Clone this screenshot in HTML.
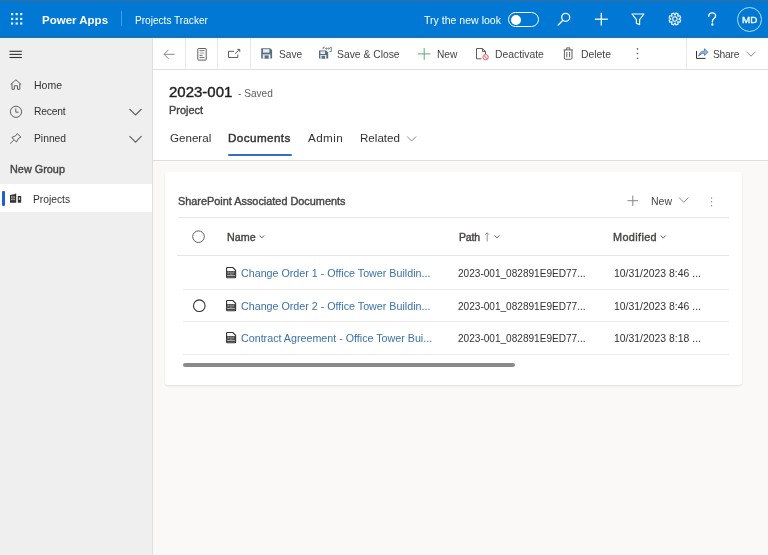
<!DOCTYPE html>
<html><head><meta charset="utf-8">
<style>
*{box-sizing:border-box;margin:0;padding:0}
html,body{width:768px;height:555px;overflow:hidden;background:#faf9f8;font-family:"Liberation Sans",sans-serif;color:#323130}
.a{position:absolute;white-space:nowrap;line-height:1;will-change:transform}
svg{position:absolute;overflow:visible}
#hdr{position:absolute;left:0;top:0;width:768px;height:37px;background:#0078d4}
#strip0{position:absolute;left:0;top:0;width:768px;height:1px;background:#2870a8}
#strip1{position:absolute;left:0;top:1px;width:768px;height:1px;background:#1474c4}
.w{color:#fff}
#side{position:absolute;left:0;top:37px;width:153px;height:518px;background:#efefef;border-right:1px solid #e1dfdd}
#cmd{position:absolute;left:153px;top:37px;width:615px;height:33px;background:#fff;border-bottom:1px solid #e1dfdd}
.sep{position:absolute;top:37px;width:1px;height:33px;background:#e8e8e8}
#fhdr{position:absolute;left:153px;top:70px;width:615px;height:91px;background:#fff;border-bottom:1px solid #e1dfdd}
#card{position:absolute;left:165px;top:172px;width:577px;height:213px;background:#fff;border-radius:3px;box-shadow:0 1px 2px rgba(0,0,0,.11),0 0 1px rgba(0,0,0,.04)}
.hl{position:absolute;height:1px;background:#edebe9}
.lnk{color:#3a72a8}
</style></head><body>
<div id="hdr"></div><div id="strip0"></div><div id="strip1"></div><div style="position:absolute;left:0;top:36px;width:768px;height:1px;background:#0a6fc4"></div><div style="position:absolute;left:0;top:37px;width:768px;height:1px;background:#2f72a8;z-index:5"></div><div style="position:absolute;left:0;top:38px;width:768px;height:1px;background:rgba(200,250,255,.5);z-index:5"></div>
<!-- waffle -->
<svg style="left:0;top:0" width="40" height="37"><g fill="#e6f6ff">
<rect x="11" y="13" width="2.2" height="2.2"/><rect x="15.6" y="13" width="2.2" height="2.2"/><rect x="20.1" y="13" width="2.2" height="2.2"/>
<rect x="11" y="17.8" width="2.2" height="2.2"/><rect x="15.6" y="17.8" width="2.2" height="2.2"/><rect x="20.1" y="17.8" width="2.2" height="2.2"/>
<rect x="11" y="22.4" width="2.2" height="2.2"/><rect x="15.6" y="22.4" width="2.2" height="2.2"/><rect x="20.1" y="22.4" width="2.2" height="2.2"/>
</g></svg>
<div class="a w" style="left:42px;top:15px;font-size:11.5px;font-weight:bold">Power Apps</div>
<div style="position:absolute;left:121px;top:11px;width:1px;height:15px;background:#4a9be0"></div>
<div class="a w" style="left:134.5px;top:15.5px;font-size:10.1px">Projects Tracker</div>
<div class="a w" style="left:424px;top:15px;font-size:10.55px">Try the new look</div>
<div style="position:absolute;left:508px;top:12px;width:31px;height:15px;border:1.3px solid #fff;border-radius:8px"></div>
<div style="position:absolute;left:511px;top:14.5px;width:10px;height:10px;border-radius:50%;background:#fff"></div>


<!-- header icons -->
<svg style="left:556px;top:12px" width="16" height="16" fill="none" stroke="#fff" stroke-width="1.3">
<circle cx="9.7" cy="5.3" r="4"/><line x1="6.9" y1="8.2" x2="2.2" y2="13" stroke-linecap="round"/></svg>
<svg style="left:594px;top:12px" width="16" height="16" stroke="#fff" stroke-width="1.3">
<line x1="7.3" y1="0.8" x2="7.3" y2="13.6"/><line x1="0.8" y1="7.2" x2="13.8" y2="7.2"/></svg>
<svg style="left:631px;top:13px" width="16" height="14" fill="none" stroke="#fff" stroke-width="1.2" stroke-linejoin="round">
<path d="M1 1 H13 L8.6 6.6 V11.6 L5.4 10.2 V6.6 Z"/></svg>
<svg style="left:0;top:0" width="768" height="37" fill="none" stroke="#fff" stroke-width="1.1" stroke-linejoin="round">
<path d="M678.99 19.26 L680.79 20.15 L679.88 22.35 L677.98 21.71 L677.61 22.08 L678.25 23.98 L676.05 24.89 L675.16 23.09 L674.64 23.09 L673.75 24.89 L671.55 23.98 L672.19 22.08 L671.82 21.71 L669.92 22.35 L669.01 20.15 L670.81 19.26 L670.81 18.74 L669.01 17.85 L669.92 15.65 L671.82 16.29 L672.19 15.92 L671.55 14.02 L673.75 13.11 L674.64 14.91 L675.16 14.91 L676.05 13.11 L678.25 14.02 L677.61 15.92 L677.98 16.29 L679.88 15.65 L680.79 17.85 L678.99 18.74 Z"/><circle cx="674.9" cy="19.0" r="2.2"/></svg>
<svg style="left:0;top:0" width="768" height="37" fill="none" stroke="#fff" stroke-width="1.35" stroke-linecap="round">
<path d="M708.8 16.2 C708.8 14 710.4 12.9 712.2 12.9 C714 12.9 715.6 14.1 715.6 15.9 C715.6 18.5 712.4 18.7 712.4 21.2 V22"/>
<circle cx="712.4" cy="24.4" r="0.55" fill="#fff"/></svg>
<div style="position:absolute;left:737px;top:7px;width:25px;height:25px;border:1.5px solid #b8dcf8;border-radius:50%"></div>
<div class="a w" style="left:741.6px;top:14.6px;font-size:9.9px;-webkit-text-stroke:0.35px #fff">MD</div>

<div id="side"></div>

<!-- sidebar content -->
<svg style="left:0;top:37px" width="152" height="180" fill="none" stroke="#323130" stroke-width="1.1">
<line x1="9.5" y1="14.3" x2="21.8" y2="14.3"/><line x1="9.5" y1="17.4" x2="21.8" y2="17.4"/><line x1="9.5" y1="20.5" x2="21.8" y2="20.5"/>
</svg>
<svg style="left:0;top:0" width="152" height="220" fill="none" stroke="#605e5c" stroke-width="1">
<path d="M10.6 84.5 L15.9 79.8 L21.2 84.5 M12 83.5 V89.3 H14.3 V85.8 H17.5 V89.3 H19.8 V83.5"/>
<circle cx="16" cy="111.8" r="5.6"/><path d="M15.8 108.5 V112.2 H18.6"/>
<path d="M17.3 133.6 L21 137.1 L18.4 138.4 L16.5 142 L11.8 137.5 L15.6 135.8 Z M13.8 140 L10.2 143.6" stroke-linejoin="round"/>
<path d="M129.5 109 L135.5 115 L141.5 109 M129.5 136.2 L135.5 142.2 L141.5 136.2" stroke="#605e5c" stroke-width="1.1"/>
</svg>
<div class="a" style="left:33.5px;top:80px;font-size:10.5px">Home</div>
<div class="a" style="left:33.5px;top:107px;font-size:10.3px;letter-spacing:-0.2px">Recent</div>
<div class="a" style="left:33.5px;top:134px;font-size:10.3px">Pinned</div>
<div class="a" style="left:9.8px;top:163.8px;font-size:10.87px;-webkit-text-stroke:0.4px #484644;color:#484644">New Group</div>
<div style="position:absolute;left:0;top:184px;width:152px;height:28px;background:#fff"></div>
<div style="position:absolute;left:2px;top:191px;width:2.5px;height:15px;background:#1a5fd6;border-radius:1px"></div>
<svg style="left:0;top:0" width="152" height="220">
<path d="M10 202.7 V195 L14.5 194.2 L16.2 193.3 V202.7 Z" fill="#323130"/>
<rect x="17.8" y="196" width="3.4" height="6.7" fill="#323130"/>
<rect x="11.2" y="196.2" width="1.3" height="1.6" fill="#d8d8d8"/><rect x="13.4" y="196.2" width="1.3" height="1.6" fill="#d8d8d8"/>
<rect x="11.2" y="198.6" width="1.3" height="1.6" fill="#d8d8d8"/><rect x="13.4" y="198.6" width="1.3" height="1.6" fill="#d8d8d8"/>
<rect x="18.8" y="197.5" width="1.3" height="2.4" fill="#d8d8d8"/>
</svg>
<div class="a" style="left:33.3px;top:194.8px;font-size:10.25px">Projects</div>

<div id="cmd"></div>
<div id="fhdr"></div>

<!-- command bar -->
<div class="sep" style="left:185px"></div><div class="sep" style="left:217px"></div><div class="sep" style="left:250px"></div><div class="sep" style="left:686px"></div>
<svg style="left:0;top:0" width="768" height="70" fill="none" stroke="#605e5c" stroke-width="1">
<path d="M164 54.3 H174.5 M168.6 49.7 L164 54.3 L168.6 58.9" stroke="#8a8886"/>
<rect x="197.8" y="48.5" width="8.4" height="11.6" rx="0.6" stroke="#605e5c"/>
<path d="M199.5 50.7 H204.5 M199.5 57.6 H204.5" stroke="#605e5c" stroke-width="0.9"/>
<rect x="199.6" y="52.3" width="4.6" height="2" fill="#c8c6c4" stroke="none"/>
<path d="M199.5 55.6 H202.5" stroke="#605e5c" stroke-width="0.9"/>
<path d="M234 51.3 H228.5 V57.5 H237.8 V54.5" stroke="#605e5c"/>
<path d="M235 53.8 L239.6 49.6 M237.3 49.4 H239.8 V51.9" stroke="#605e5c"/>
</svg>
<svg style="left:0;top:0" width="768" height="70">
<path d="M261.2 48.2 H270.2 L272.1 50.1 V58.6 H261.2 Z" fill="#5b6e80"/>
<rect x="263" y="49.2" width="6.4" height="3.4" fill="#e8eef3"/>
<rect x="262.8" y="54.4" width="7.6" height="4.2" fill="#e8eef3"/><rect x="264.6" y="55.4" width="4" height="3.2" fill="#5b6e80"/>
</svg>
<div class="a" style="left:278.8px;top:50px;font-size:10.2px;color:#464442">Save</div>
<svg style="left:0;top:0" width="768" height="70">
<path d="M319 50.5 H326.2 L328.2 52.5 V58.6 H319 Z" fill="#5b6e80"/>
<rect x="320.4" y="51.4" width="4.6" height="2.6" fill="#e8eef3"/>
<rect x="320.3" y="55" width="6" height="3.6" fill="#e8eef3"/><rect x="321.6" y="55.8" width="3.4" height="2.8" fill="#5b6e80"/>
<path d="M323.2 49.3 V47.3 H324.8 M329.8 47.3 H331.3 V51.6 H329.5" fill="none" stroke="#5b6e80" stroke-width="0.9"/>
<path d="M325.5 48.6 H329.6 M326.7 47.5 L325.5 48.6 L326.7 49.7 M328.4 47.5 L329.6 48.6 L328.4 49.7" fill="none" stroke="#5b6e80" stroke-width="0.7"/>
</svg>
<div class="a" style="left:337px;top:50px;font-size:10.33px;color:#464442">Save &amp; Close</div>
<svg style="left:0;top:0" width="768" height="70" stroke="#5fa877" stroke-width="1">
<line x1="424.2" y1="48" x2="424.2" y2="59.8"/><line x1="418" y1="53.9" x2="430.4" y2="53.9"/></svg>
<div class="a" style="left:436.7px;top:50px;font-size:10.2px;color:#464442">New</div>
<svg style="left:0;top:0" width="768" height="70" fill="none" stroke="#605e5c" stroke-width="1">
<path d="M481.5 58.8 H476.5 V48.5 H482.5 L485.5 51.5 V54 M482.5 48.5 V51.5 H485.5"/>
<circle cx="485.6" cy="57.2" r="2.7" fill="#fde7e7" stroke="#e06a6e" stroke-width="1"/><line x1="483.8" y1="55.4" x2="487.4" y2="59" stroke="#e06a6e" stroke-width="0.9"/>
</svg>
<div class="a" style="left:494.6px;top:50px;font-size:10.35px;color:#464442">Deactivate</div>
<svg style="left:0;top:0" width="768" height="70" fill="none" stroke="#605e5c" stroke-width="1">
<path d="M563.6 49.9 H572.8 M566.6 49.9 V47.9 H569.8 V49.9 M564.4 49.9 V58 Q564.4 59.3 565.7 59.3 H570.7 Q572 59.3 572 58 V49.9 M566.8 52 V57.3 M569.6 52 V57.3"/>
</svg>
<div class="a" style="left:580.8px;top:50px;font-size:10.38px;color:#464442">Delete</div>
<svg style="left:0;top:0" width="768" height="70" fill="#605e5c">
<circle cx="637.5" cy="48.9" r="0.8"/><circle cx="637.5" cy="53.6" r="0.8"/><circle cx="637.5" cy="58.3" r="0.8"/>
</svg>
<svg style="left:0;top:0" width="768" height="70" fill="none">
<path d="M696.5 51 V58.4 H705.5" stroke="#323130" stroke-width="1"/>
<path d="M698.6 56.2 C699.2 52.6 701.6 51.1 704.5 51 V48.6 L708 52.2 L704.5 55.6 V53.4 C702.2 53.3 700.2 54.2 698.6 56.2 Z" fill="#8dbbe6" stroke="#3d6f9f" stroke-width="0.7"/>
</svg>
<div class="a" style="left:713px;top:49.6px;font-size:10.3px;letter-spacing:-0.25px;color:#464442">Share</div>
<svg style="left:0;top:0" width="768" height="70" fill="none" stroke="#8a8886" stroke-width="1">
<path d="M746.5 51.7 L751 56.2 L755.5 51.7"/></svg>


<!-- form header -->
<div class="a" style="left:169px;top:84.3px;font-size:15px;-webkit-text-stroke:0.4px #201f1e;color:#201f1e">2023-001</div>
<div class="a" style="left:238px;top:89px;font-size:10.1px;color:#605e5c">- Saved</div>
<div class="a" style="left:168.8px;top:105.2px;font-size:10.92px;-webkit-text-stroke:0.4px #484644;color:#484644">Project</div>
<div class="a" style="left:169.5px;top:132.3px;font-size:11.6px;color:#323130">General</div>
<div class="a" style="left:228.4px;top:132.3px;font-size:11.66px;letter-spacing:0.42px;-webkit-text-stroke:0.4px #323130;color:#323130">Documents</div>
<div style="position:absolute;left:228.4px;top:154px;width:63.2px;height:2px;background:#2f6fc9;border-radius:1px"></div>
<div class="a" style="left:308px;top:132.3px;font-size:11.66px;letter-spacing:0.43px;color:#323130">Admin</div>
<div class="a" style="left:360.3px;top:132.3px;font-size:11.6px;color:#323130">Related</div>
<svg style="left:0;top:0" width="768" height="170" fill="none" stroke="#8a8886" stroke-width="1">
<path d="M407.2 136.5 L411.7 141 L416.2 136.5"/></svg>

<div id="card"></div>

<!-- card content -->
<div class="a" style="left:178px;top:195.5px;font-size:10.88px;-webkit-text-stroke:0.4px #484644;color:#484644">SharePoint Associated Documents</div>
<svg style="left:0;top:0" width="768" height="400" fill="none" stroke="#605e5c" stroke-width="1">
<path d="M632.8 195.5 V206 M627.5 200.7 H638.1" stroke="#8a8886"/>
<path d="M679 197.5 L683.8 202.3 L688.6 197.5" stroke="#8a8886"/>
</svg>
<div class="a" style="left:651px;top:195.8px;font-size:10.5px;color:#484644">New</div>
<svg style="left:0;top:0" width="768" height="400" fill="#8a8886">
<circle cx="711.5" cy="197.9" r="0.75"/><circle cx="711.5" cy="201.8" r="0.75"/><circle cx="711.5" cy="205.7" r="0.75"/>
</svg>
<div class="hl" style="left:178px;top:217px;width:551px;background:#e8e6e4"></div>
<svg style="left:0;top:0" width="768" height="400" fill="none" stroke="#605e5c" stroke-width="1">
<circle cx="198.5" cy="236.7" r="5.8" stroke="#605e5c"/>
<path d="M259.5 235.6 L261.8 237.9 L264.1 235.6" stroke="#484644" stroke-width="0.9"/>
<path d="M487.2 241.5 V232.8 M485.2 234.8 L487.2 232.8 L489.2 234.8" stroke="#8a8886" stroke-width="0.9"/>
<path d="M494.5 235.4 L497 237.9 L499.5 235.4" stroke="#484644" stroke-width="0.9"/>
<path d="M660.7 235.6 L663.2 238.1 L665.7 235.6" stroke="#484644" stroke-width="0.9"/>
</svg>
<div class="a" style="left:226.5px;top:232px;font-size:10.72px;-webkit-text-stroke:0.4px #484644;color:#484644">Name</div>
<div class="a" style="left:458.5px;top:232px;font-size:10.5px;letter-spacing:-0.2px;-webkit-text-stroke:0.4px #484644;color:#484644">Path</div>
<div class="a" style="left:612.8px;top:232px;font-size:10.9px;letter-spacing:0.35px;-webkit-text-stroke:0.4px #484644;color:#484644">Modified</div>
<div class="hl" style="left:177px;top:255px;width:552px;background:#e8e6e4"></div>
<div class="hl" style="left:183px;top:289px;width:546px"></div>
<div class="hl" style="left:183px;top:321px;width:546px"></div>
<div class="hl" style="left:183px;top:354px;width:546px"></div>
<svg style="left:0;top:0" width="768" height="400" fill="none" stroke="#605e5c" stroke-width="1">
<circle cx="199.3" cy="305.7" r="5.8" stroke="#323130" stroke-width="1.1"/>
</svg>
<svg style="left:226px;top:267.2px" width="11" height="12">
<path d="M0.6 1.3 Q0.6 0.5 1.4 0.5 H6.8 L9.6 3.3 V9.9 Q9.6 10.7 8.8 10.7 H1.4 Q0.6 10.7 0.6 9.9 Z" fill="#fff" stroke="#323130" stroke-width="1.1"/>
<rect x="1" y="4" width="8.2" height="4.3" fill="#484644"/>
<path d="M2 4.9 V7.4 M2 4.9 H3.1 V6.1 H2 M4.3 4.9 V7.4 H5.3 Q5.8 7.4 5.8 6.9 V5.4 Q5.8 4.9 5.3 4.9 Z M6.9 4.9 V7.4 M6.9 4.9 H8.4 M6.9 6.1 H8" stroke="#bdbdbd" stroke-width="0.5" fill="none"/>
<rect x="1" y="8.8" width="8.2" height="1.4" fill="#484644"/>
</svg>
<div class="a lnk" style="left:241px;top:268.3px;font-size:10.71px">Change Order 1 - Office Tower Buildin...</div>
<div class="a" style="left:457.7px;top:269.3px;font-size:10.07px">2023-001_082891E9ED77...</div>
<div class="a" style="left:613.5px;top:269.3px;font-size:10.43px">10/31/2023 8:46 ...</div>
<svg style="left:226px;top:299.7px" width="11" height="12">
<path d="M0.6 1.3 Q0.6 0.5 1.4 0.5 H6.8 L9.6 3.3 V9.9 Q9.6 10.7 8.8 10.7 H1.4 Q0.6 10.7 0.6 9.9 Z" fill="#fff" stroke="#323130" stroke-width="1.1"/>
<rect x="1" y="4" width="8.2" height="4.3" fill="#484644"/>
<path d="M2 4.9 V7.4 M2 4.9 H3.1 V6.1 H2 M4.3 4.9 V7.4 H5.3 Q5.8 7.4 5.8 6.9 V5.4 Q5.8 4.9 5.3 4.9 Z M6.9 4.9 V7.4 M6.9 4.9 H8.4 M6.9 6.1 H8" stroke="#bdbdbd" stroke-width="0.5" fill="none"/>
<rect x="1" y="8.8" width="8.2" height="1.4" fill="#484644"/>
</svg>
<div class="a lnk" style="left:241px;top:300.8px;font-size:10.71px">Change Order 2 - Office Tower Buildin...</div>
<div class="a" style="left:457.7px;top:301.8px;font-size:10.07px">2023-001_082891E9ED77...</div>
<div class="a" style="left:613.5px;top:301.8px;font-size:10.43px">10/31/2023 8:46 ...</div>
<svg style="left:226px;top:332.2px" width="11" height="12">
<path d="M0.6 1.3 Q0.6 0.5 1.4 0.5 H6.8 L9.6 3.3 V9.9 Q9.6 10.7 8.8 10.7 H1.4 Q0.6 10.7 0.6 9.9 Z" fill="#fff" stroke="#323130" stroke-width="1.1"/>
<rect x="1" y="4" width="8.2" height="4.3" fill="#484644"/>
<path d="M2 4.9 V7.4 M2 4.9 H3.1 V6.1 H2 M4.3 4.9 V7.4 H5.3 Q5.8 7.4 5.8 6.9 V5.4 Q5.8 4.9 5.3 4.9 Z M6.9 4.9 V7.4 M6.9 4.9 H8.4 M6.9 6.1 H8" stroke="#bdbdbd" stroke-width="0.5" fill="none"/>
<rect x="1" y="8.8" width="8.2" height="1.4" fill="#484644"/>
</svg>
<div class="a lnk" style="left:241px;top:333.3px;font-size:10.71px">Contract Agreement - Office Tower Bui...</div>
<div class="a" style="left:457.7px;top:334.3px;font-size:10.07px">2023-001_082891E9ED77...</div>
<div class="a" style="left:613.5px;top:334.3px;font-size:10.43px">10/31/2023 8:18 ...</div>
<div style="position:absolute;left:182.5px;top:362.8px;width:332.5px;height:4.6px;background:#8a8a8a;border-radius:2.3px"></div>
</body></html>
